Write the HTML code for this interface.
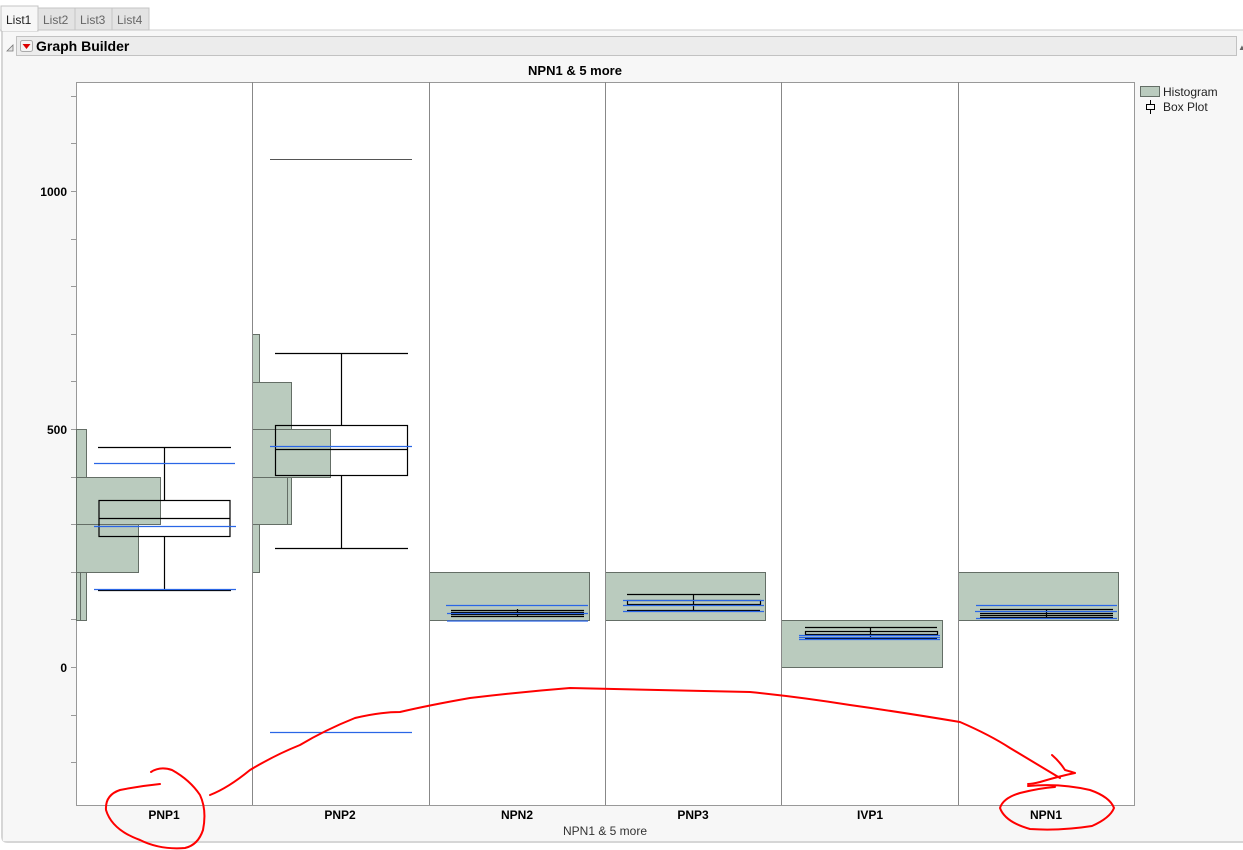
<!DOCTYPE html>
<html><head><meta charset="utf-8"><style>
html,body{margin:0;padding:0;background:#fff;width:1243px;height:850px;overflow:hidden;font-family:"Liberation Sans",sans-serif}
</style></head><body>
<svg width="1243" height="850" viewBox="0 0 1243 850" xmlns="http://www.w3.org/2000/svg" font-family="Liberation Sans, sans-serif">
<!-- outer panel -->
<rect x="0" y="0" width="1243" height="850" fill="#fff"/>
<path d="M2,30 L2,836 Q2,842 8,842 L1243,842" fill="#f7f7f7" stroke="#d6d6d6" stroke-width="2"/>
<rect x="3" y="30" width="1240" height="811" fill="#f7f7f7"/>
<line x1="0" y1="30" x2="1243" y2="30" fill="none" stroke="#cfcfcf"/>
<!-- tabs -->
<rect x="38" y="8" width="37" height="22" fill="#e3e3e3" stroke="#c4c4c4"/>
<rect x="75" y="8" width="37" height="22" fill="#e3e3e3" stroke="#c4c4c4"/>
<rect x="112" y="8" width="37" height="22" fill="#e3e3e3" stroke="#c4c4c4"/>
<rect x="1" y="6" width="37" height="25" fill="#f7f7f7" stroke="#c4c4c4"/>
<line x1="2" y1="30" x2="37" y2="30" stroke="#f7f7f7" stroke-width="2"/>
<text x="6" y="24" font-size="12" fill="#222">List1</text>
<text x="43" y="24" font-size="12" fill="#666">List2</text>
<text x="80" y="24" font-size="12" fill="#666">List3</text>
<text x="117" y="24" font-size="12" fill="#666">List4</text>
<!-- header -->
<path d="M7,51 L13,45 L13,51 Z" fill="#e6e6e6" stroke="#777" stroke-width="0.8"/>
<rect x="16.5" y="36.5" width="1220" height="19" fill="#ececec" stroke="#c2c2c2"/>
<rect x="20.5" y="40.5" width="12" height="11" rx="2" fill="#f4f4f4" stroke="#aaa"/>
<path d="M22.5,44 L30.5,44 L26.5,49 Z" fill="#d00"/>
<text x="36" y="51" font-size="14" font-weight="bold" fill="#000">Graph Builder</text>
<text x="1238" y="50" font-size="8" fill="#666">▲</text>
<!-- title -->
<text x="575" y="75" font-size="13" font-weight="bold" text-anchor="middle">NPN1 &amp; 5 more</text>
<!-- plot area -->
<rect x="76.5" y="82.5" width="1058" height="723" fill="#fff" stroke="#999"/>
<!-- y axis ticks -->
<g stroke="#999">
<line x1="71" y1="96.5" x2="76" y2="96.5"/><line x1="71" y1="143.5" x2="76" y2="143.5"/>
<line x1="71" y1="191.5" x2="76" y2="191.5"/><line x1="71" y1="239.5" x2="76" y2="239.5"/>
<line x1="71" y1="286.5" x2="76" y2="286.5"/><line x1="71" y1="334.5" x2="76" y2="334.5"/>
<line x1="71" y1="381.5" x2="76" y2="381.5"/><line x1="71" y1="429.5" x2="76" y2="429.5"/>
<line x1="71" y1="477.5" x2="76" y2="477.5"/><line x1="71" y1="524.5" x2="76" y2="524.5"/>
<line x1="71" y1="572.5" x2="76" y2="572.5"/><line x1="71" y1="619.5" x2="76" y2="619.5"/>
<line x1="71" y1="667.5" x2="76" y2="667.5"/><line x1="71" y1="715.5" x2="76" y2="715.5"/>
<line x1="71" y1="762.5" x2="76" y2="762.5"/>
</g>
<g font-size="12" font-weight="bold" text-anchor="end">
<text x="67" y="196">1000</text><text x="67" y="434">500</text><text x="67" y="672">0</text>
</g>
<!-- histograms -->
<g fill="#bacbbe" stroke="#646e66">
<rect x="76.5" y="429.5" width="10" height="191"/>
<rect x="76.5" y="477.5" width="84" height="47"/>
<rect x="76.5" y="524.5" width="62" height="48"/>
<rect x="76.5" y="572.5" width="4" height="48"/>
<rect x="252.5" y="334.5" width="7" height="238"/>
<rect x="252.5" y="382.5" width="39" height="142"/>
<rect x="252.5" y="429.5" width="78" height="48"/>
<rect x="252.5" y="477.5" width="35" height="47"/>
<rect x="429.5" y="572.5" width="160" height="48"/>
<rect x="605.5" y="572.5" width="160" height="48"/>
<rect x="781.5" y="620.5" width="161" height="47"/>
<rect x="958.5" y="572.5" width="160" height="48"/>
</g>
<!-- panel dividers -->
<g stroke="#888"><line x1="252.5" y1="82" x2="252.5" y2="805"/><line x1="429.5" y1="82" x2="429.5" y2="805"/><line x1="605.5" y1="82" x2="605.5" y2="805"/><line x1="781.5" y1="82" x2="781.5" y2="805"/><line x1="958.5" y1="82" x2="958.5" y2="805"/></g>
<!-- box plots -->
<g stroke="#000" fill="none" stroke-width="1.2">
<line x1="98" y1="447.5" x2="231" y2="447.5"/><line x1="98" y1="590.5" x2="231" y2="590.5"/>
<line x1="164.5" y1="447" x2="164.5" y2="500"/><line x1="164.5" y1="536" x2="164.5" y2="590"/>
<rect x="99" y="500.5" width="131" height="36"/><line x1="99" y1="518.5" x2="230" y2="518.5"/>
<line x1="275" y1="353.5" x2="408" y2="353.5"/><line x1="275" y1="548.5" x2="408" y2="548.5"/>
<line x1="341.5" y1="353" x2="341.5" y2="425"/><line x1="341.5" y1="475" x2="341.5" y2="548"/>
<rect x="275.5" y="425.5" width="132" height="50"/><line x1="275" y1="449.5" x2="408" y2="449.5"/>
<line x1="451" y1="610.5" x2="584" y2="610.5"/><line x1="451" y1="612.5" x2="584" y2="612.5"/><line x1="451" y1="614.5" x2="584" y2="614.5"/><line x1="451" y1="616.5" x2="584" y2="616.5"/><line x1="517.5" y1="609" x2="517.5" y2="617"/>
<line x1="627" y1="594.5" x2="760" y2="594.5"/><rect x="627.5" y="600.5" width="133" height="4"/><line x1="627" y1="610.5" x2="760" y2="610.5"/><line x1="693.5" y1="594" x2="693.5" y2="610"/>
<line x1="805" y1="627.5" x2="937" y2="627.5"/><rect x="805.5" y="631.5" width="132" height="3"/><line x1="805" y1="638.5" x2="937" y2="638.5"/><line x1="870.5" y1="627" x2="870.5" y2="638"/>
<line x1="980" y1="609.5" x2="1113" y2="609.5"/><line x1="980" y1="613.5" x2="1113" y2="613.5"/><line x1="980" y1="615.5" x2="1113" y2="615.5"/><line x1="980" y1="617.5" x2="1113" y2="617.5"/><line x1="1046.5" y1="609" x2="1046.5" y2="618"/>
</g>
<!-- dark line PNP2 -->
<line x1="270" y1="159.5" x2="412" y2="159.5" stroke="#555"/>
<!-- blue lines -->
<g stroke="#2a66e6" stroke-width="1.2">
<line x1="94" y1="463.5" x2="235" y2="463.5"/><line x1="94" y1="526.5" x2="236" y2="526.5"/><line x1="94" y1="589.5" x2="236" y2="589.5"/>
<line x1="270" y1="446.5" x2="412" y2="446.5"/><line x1="270" y1="732.5" x2="412" y2="732.5"/>
<line x1="446" y1="605.5" x2="588" y2="605.5"/><line x1="447" y1="613.5" x2="588" y2="613.5"/><line x1="447" y1="621" x2="588" y2="621"/>
<line x1="623" y1="600.5" x2="764" y2="600.5"/><line x1="623" y1="605.5" x2="764" y2="605.5"/><line x1="623" y1="611.5" x2="764" y2="611.5"/>
<line x1="799" y1="635.5" x2="940" y2="635.5"/><line x1="799" y1="637.5" x2="940" y2="637.5"/><line x1="799" y1="639.5" x2="940" y2="639.5"/>
<line x1="976" y1="605.5" x2="1117" y2="605.5"/><line x1="975" y1="611.5" x2="1117" y2="611.5"/><line x1="976" y1="618.5" x2="1117" y2="618.5"/>
</g>
<!-- x labels -->
<g font-size="12" font-weight="bold" text-anchor="middle">
<text x="164" y="819">PNP1</text><text x="340" y="819">PNP2</text><text x="517" y="819">NPN2</text><text x="693" y="819">PNP3</text><text x="870" y="819">IVP1</text><text x="1046" y="819">NPN1</text>
</g>
<text x="605" y="835" font-size="12" text-anchor="middle" fill="#333">NPN1 &amp; 5 more</text>
<!-- legend -->
<rect x="1140.5" y="86.5" width="19" height="10" fill="#bacbbe" stroke="#646e66"/>
<text x="1163" y="96" font-size="12" fill="#222">Histogram</text>
<g stroke="#000" fill="none"><rect x="1146.5" y="104.5" width="8" height="5"/><line x1="1150.5" y1="100" x2="1150.5" y2="104"/><line x1="1150.5" y1="110" x2="1150.5" y2="114"/></g>
<text x="1163" y="111" font-size="12" fill="#222">Box Plot</text>
<!-- red annotations -->
<g stroke="#f00" stroke-width="2" fill="none" stroke-linecap="round" stroke-linejoin="round">
<path d="M151,772 Q160,766 172,770 Q190,780 200,795 Q207,810 203,830 Q198,845 185,848 Q160,850 140,840 Q112,830 106,810 Q105,795 120,790 Q140,786 160,784"/>
<path d="M210,795 Q228,788 250,770 Q275,755 300,745 Q325,730 355,718 Q380,712 400,712 Q430,705 470,698 Q520,692 570,688 Q650,690 750,692 Q800,697 850,705 Q900,712 960,722 Q990,735 1010,748 Q1030,760 1060,778"/>
<path d="M1052,755 Q1060,762 1065,770 Q1072,772 1075,773 Q1060,776 1040,782 Q1032,784 1028,784"/>
<path d="M1028,786 Q1060,783 1090,790 Q1110,797 1114,808 Q1110,818 1092,826 Q1060,831 1030,829 Q1005,822 1000,808 Q1003,798 1020,793 Q1040,788 1055,787"/>
</g>
</svg>
</body></html>
